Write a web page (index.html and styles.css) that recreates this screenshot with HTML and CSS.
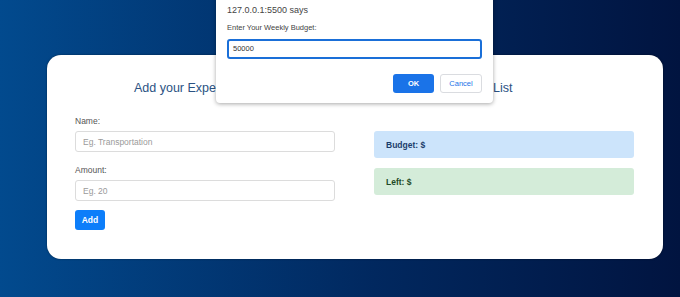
FILE: index.html
```html
<!DOCTYPE html>
<html lang="en">
<head>
    <meta charset="UTF-8">
    <meta name="viewport" content="width=device-width, initial-scale=1.0">
    <title>Budget App</title>
    <link rel="stylesheet" href="styles.css">
</head>
<body>
    <div class="card">
        <div class="row">
            <div class="col">
                <h3 class="title">Add your Expenses</h3>
                <label class="field-label" for="name">Name:</label>
                <input class="field" id="name" type="text" placeholder="Eg. Transportation">
                <label class="field-label" for="amount">Amount:</label>
                <input class="field" id="amount" type="text" placeholder="Eg. 20">
                <button class="btn-add">Add</button>
            </div>
            <div class="col">
                <h3 class="title title-right">Expense List</h3>
                <div class="alert alert-primary">Budget: $</div>
                <div class="alert alert-success">Left: $</div>
            </div>
        </div>
    </div>

    <!-- browser prompt() dialog -->
    <div class="prompt">
        <div class="prompt-origin">127.0.0.1:5500 says</div>
        <div class="prompt-msg">Enter Your Weekly Budget:</div>
        <div class="prompt-input">50000</div>
        <div class="prompt-actions">
            <button class="prompt-ok">OK</button>
            <button class="prompt-cancel">Cancel</button>
        </div>
    </div>
</body>
</html>
```

FILE: styles.css
```css
body {
    margin: 0;
    height: 297px;
    overflow: hidden;
    background: linear-gradient(90deg, #024a8e 0%, #01285f 55%, #011440 100%);
    font-family: "Liberation Sans", Arial, sans-serif;
    position: relative;
}
.card {
    margin: 55px 0 0 47px;
    width: 616px;
    box-sizing: border-box;
    padding: 24px 29px 29px 28px;
    background: #fff;
    border-radius: 14px;
    box-shadow: 0 0 2px rgba(0, 0, 0, 0.5);
}
.row {
    display: grid;
    grid-template-columns: 260px 260px;
    column-gap: 39px;
}
.col {
    display: flex;
    flex-direction: column;
    align-items: flex-start;
}
.title {
    margin: 0 0 17px 59px;
    font-size: 12.5px;
    line-height: 18px;
    font-weight: normal;
    color: #2b5283;
}
.title-right {
    margin-left: 67px;
}
.field-label {
    font-size: 8.5px;
    line-height: 14px;
    color: #555;
    margin-bottom: 3px;
}
.field {
    width: 260px;
    height: 21px;
    box-sizing: border-box;
    border: 1px solid #dcdcdc;
    border-radius: 3px;
    padding: 0 7px;
    font-family: inherit;
    font-size: 8.5px;
    margin-bottom: 10px;
}
.field::placeholder {
    color: #9a9a9a;
}
#name {
    margin-bottom: 11px;
}
.btn-add {
    margin-top: -1px;
    width: 30px;
    height: 20px;
    padding: 0;
    border: none;
    border-radius: 3px;
    background: #0d7efa;
    color: #fff;
    font-family: inherit;
    font-size: 8.5px;
    font-weight: bold;
}
.alert {
    width: 260px;
    height: 27px;
    box-sizing: border-box;
    padding: 0 12px;
    display: flex;
    align-items: center;
    border-radius: 3px;
    font-size: 8.5px;
    font-weight: bold;
}
.alert-primary {
    margin-top: 17px;
    background: #cce4fb;
    color: #1a3d6b;
    margin-bottom: 10px;
}
.alert-success {
    background: #d4ecd9;
    color: #1e4a27;
}

/* prompt dialog */
.prompt {
    position: absolute;
    left: 216px;
    top: -6px;
    width: 277px;
    height: 109px;
    box-sizing: border-box;
    padding: 9px 11px 0 11px;
    background: #fff;
    border-radius: 0 0 4px 4px;
    box-shadow: 0 1px 4px rgba(0, 0, 0, 0.35);
}
.prompt-origin {
    font-size: 9px;
    line-height: 14px;
    color: #444;
}
.prompt-msg {
    margin-top: 5px;
    font-size: 7.5px;
    line-height: 12px;
    color: #444;
}
.prompt-input {
    margin-top: 5px;
    height: 20px;
    box-sizing: border-box;
    border: 2px solid #1a6fd8;
    border-radius: 3px;
    padding: 0 4px;
    font-size: 7.5px;
    line-height: 16px;
    color: #333;
}
.prompt-actions {
    margin-top: 15px;
    display: flex;
    justify-content: flex-end;
    gap: 6px;
}
.prompt-ok {
    width: 41px;
    height: 19px;
    border: none;
    border-radius: 3px;
    background: #1a73e8;
    color: #fff;
    font-family: inherit;
    font-size: 7.5px;
    font-weight: bold;
}
.prompt-cancel {
    width: 42px;
    height: 19px;
    border: 1px solid #dadce0;
    border-radius: 3px;
    background: #fff;
    color: #1a73e8;
    font-family: inherit;
    font-size: 7.5px;
}
```
